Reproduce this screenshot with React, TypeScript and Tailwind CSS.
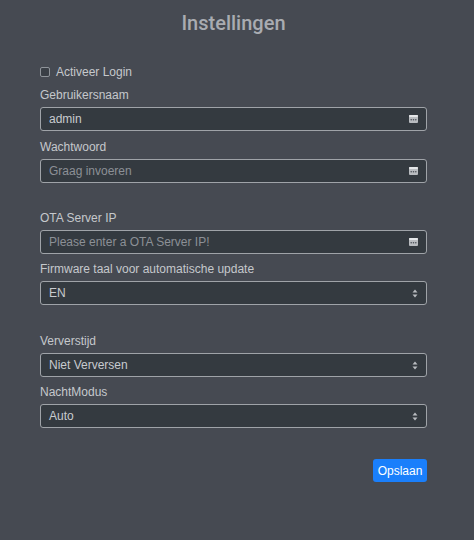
import React, { useState } from "react";

const labelClass = "block h-4 leading-4 text-[12px] text-[#c5c8cc] mb-1";
const fieldClass =
  "w-full h-6 rounded-[3px] border border-[#9fa3a8] bg-[#343a40] px-[8px] text-[12px] text-[#c8cbcf] flex items-center justify-between";

function AutofillIcon() {
  return (
    <svg width="9" height="8" viewBox="0 0 9 8" className="shrink-0">
      <rect x="0" y="0" width="9" height="8" rx="1" fill="#b9bcc0" />
      <rect x="0" y="0" width="9" height="2" rx="1" fill="#e4e6e8" />
      <circle cx="2.2" cy="4.8" r="0.8" fill="#4a4f56" />
      <circle cx="4.5" cy="4.8" r="0.8" fill="#4a4f56" />
      <circle cx="6.8" cy="4.8" r="0.8" fill="#4a4f56" />
    </svg>
  );
}

function SelectArrows() {
  return (
    <svg width="6" height="9" viewBox="0 0 6 9" className="shrink-0">
      <path d="M3 0.5 L5.5 3.5 H0.5 Z" fill="#b9bcc0" />
      <path d="M3 8.5 L5.5 5.5 H0.5 Z" fill="#b9bcc0" />
    </svg>
  );
}

interface FieldProps {
  label: string;
  value?: string;
  placeholder?: string;
  select?: boolean;
  className?: string;
}

function Field({ label, value, placeholder, select, className }: FieldProps) {
  return (
    <div className={className}>
      <label className={labelClass}>{label}</label>
      <div className={fieldClass}>
        {value ? (
          <span className="text-[#c8cbcf]">{value}</span>
        ) : (
          <span className="text-[#8c9096]">{placeholder}</span>
        )}
        {select ? <SelectArrows /> : <AutofillIcon />}
      </div>
    </div>
  );
}

export default function App() {
  const [login, setLogin] = useState(false);

  return (
    <div className="w-[474px] h-[540px] bg-[#464a52] font-['Liberation_Sans',Arial,sans-serif]">
      <h1 className="pt-[9px] pr-[7px] h-[37px] leading-[28px] text-center text-[20px] font-medium font-['Roboto',sans-serif] text-[#a9acb1]">
        Instellingen
      </h1>
      <form className="px-[40px] pt-[27px] w-[467px] flex flex-col">
        <label className="flex items-center h-4 gap-[6px] text-[12px] text-[#c5c8cc]">
          <span
            onClick={() => setLogin(!login)}
            className="w-[10px] h-[10px] rounded-[2px] border border-[#8f949a] bg-[#3a3f46]"
          />
          Activeer Login
        </label>
        <Field className="mt-[7px]" label="Gebruikersnaam" value="admin" />
        <Field className="mt-2" label="Wachtwoord" placeholder="Graag invoeren" />
        <Field className="mt-[27px]" label="OTA Server IP" placeholder="Please enter a OTA Server IP!" />
        <Field className="mt-[7px]" label="Firmware taal voor automatische update" value="EN" select />
        <Field className="mt-[28px]" label="Ververstijd" value="Niet Verversen" select />
        <Field className="mt-[7px]" label="NachtModus" value="Auto" select />
        <div className="flex justify-end mt-[31px]">
          <button
            type="button"
            className="h-[23px] w-[54px] rounded-[3px] bg-[#1a7ffb] text-[12px] text-white"
          >
            Opslaan
          </button>
        </div>
      </form>
    </div>
  );
}
